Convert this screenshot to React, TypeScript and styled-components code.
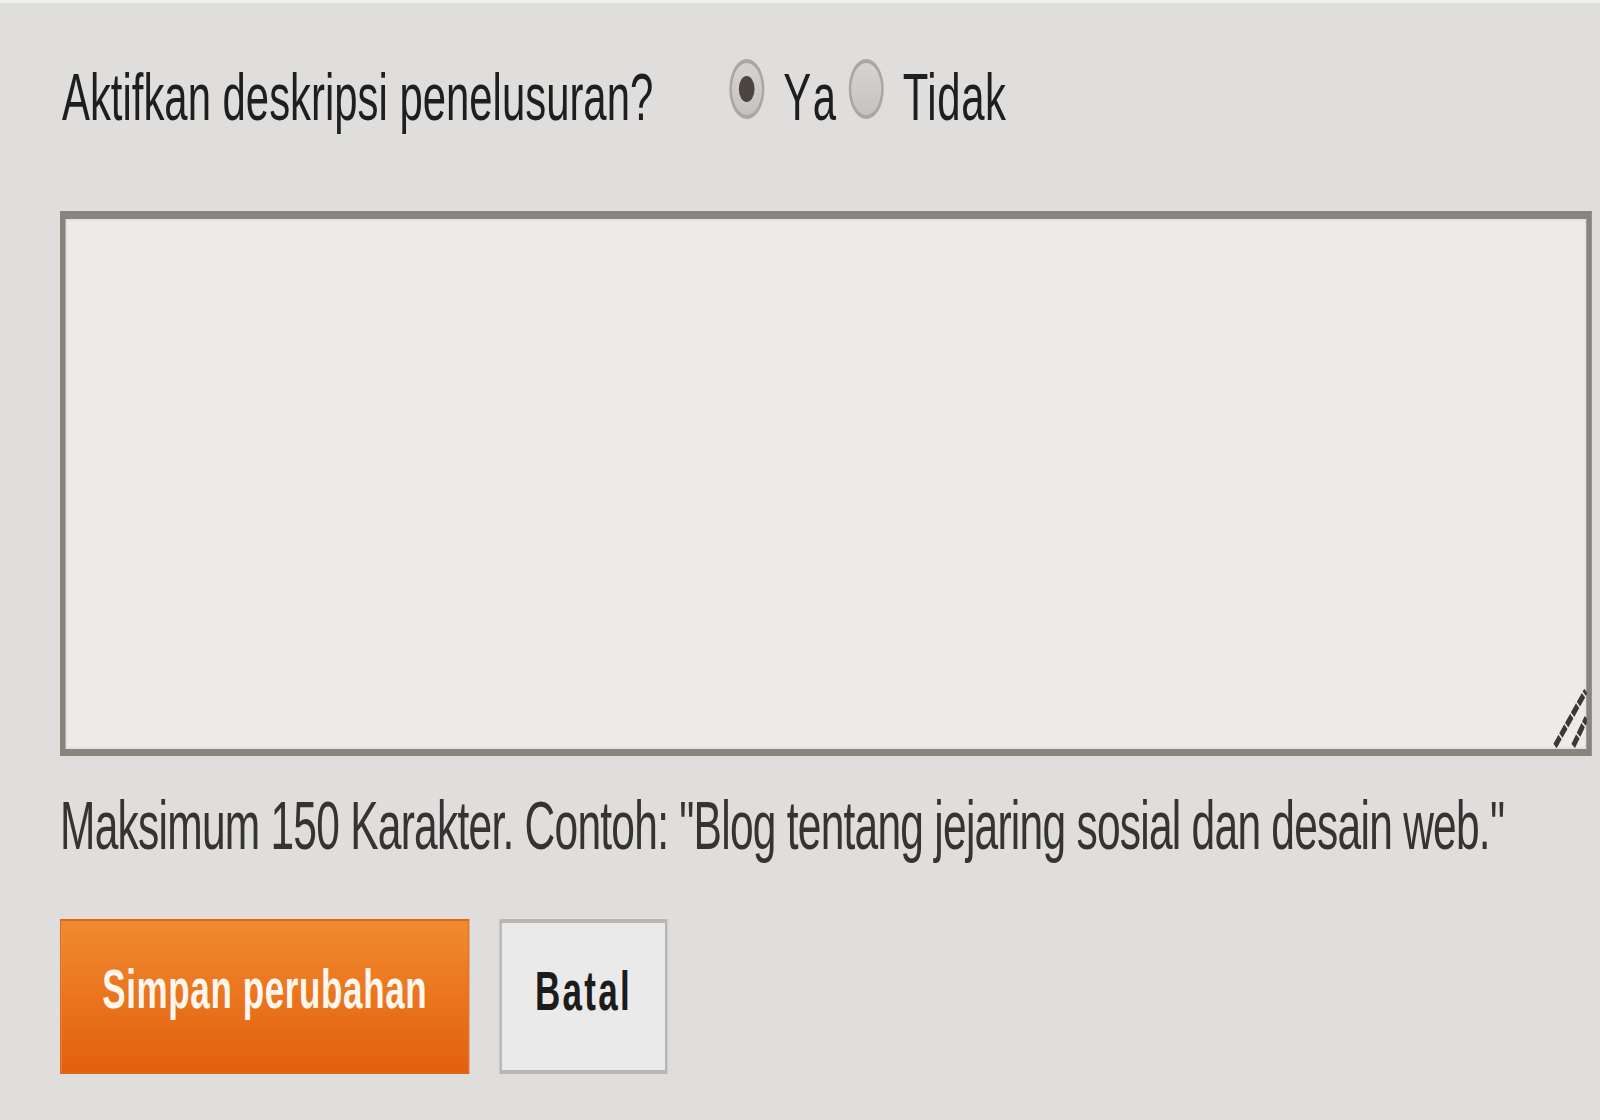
import styled, { createGlobalStyle } from 'styled-components';

// the screenshot is squeezed sideways, so the page is laid out wide and scaled back
const S = 0.625;
const ux = (n: number) => `${(n / S).toFixed(1)}px`;

const GlobalStyle = createGlobalStyle`
  html, body {
    margin: 0;
    padding: 0;
    overflow: hidden;
    background: #dfdedd;
  }
`;

const Stage = styled.div`
  width: ${ ux(1600) };
  height: 1120px;
  box-sizing: border-box;
  transform: scaleX(${ S });
  transform-origin: 0 0;
  border-top: 3px solid #efefee;
  padding: 54px 0 0 ${ ux(60) };
  font-family: "Liberation Sans", Arial, sans-serif;
  color: #1e1e1e;
`;

const Row = styled.div`
  display: flex;
  align-items: flex-end;
  height: 80px;
`;

const Question = styled.span`
  font-size: 67px;
  line-height: 80px;
  padding-left: ${ ux(2) };
  margin-right: ${ ux(76) };
  white-space: nowrap;
`;

const Radio = styled.span<{ $checked?: boolean }>`
  position: relative;
  width: ${ ux(35) };
  height: 60px;
  margin-bottom: 18px;
  box-sizing: border-box;
  border-radius: 50%;
  border: 4px solid #aaa6a3;
  background: linear-gradient(#d6d3d1, #c6c2bf);
  flex: none;

  &::after {
    content: '';
    display: ${ ({ $checked }) => ($checked ? 'block' : 'none') };
    position: absolute;
    left: 50%;
    top: 50%;
    width: ${ ux(16) };
    height: 26px;
    border-radius: 50%;
    background: #4b4441;
    transform: translate(-50%, -50%);
  }
`;

const Choice = styled.span<{ $gap: number; $spacing: number }>`
  font-size: 67px;
  line-height: 80px;
  margin-left: ${ ux(19) };
  margin-right: ${ ({ $gap }) => ux($gap) };
  letter-spacing: ${ ({ $spacing }) => $spacing }px;
`;

const AreaWrap = styled.div`
  position: relative;
  margin-top: 74px;
  width: ${ ux(1532) };
  height: 545px;
`;

const Area = styled.textarea`
  display: block;
  width: 100%;
  height: 100%;
  box-sizing: border-box;
  margin: 0;
  resize: none;
  outline: none;
  border-style: solid;
  border-color: #8a847f;
  border-width: 8px ${ ux(6) } 7px ${ ux(6) };
  background: #ecebe9;
  box-shadow: inset 0 0 0 2px #e4e2e0;
  font: 30px "Liberation Sans", Arial, sans-serif;
`;

const Grip = styled.svg`
  position: absolute;
  right: ${ ux(5) };
  bottom: 6px;
  width: ${ ux(34) };
  height: 62px;
  pointer-events: none;
`;

const Hint = styled.p`
  margin: 29px 0 0;
  font-size: 68px;
  line-height: 80px;
  color: #353433;
  letter-spacing: -1.2px;
  white-space: nowrap;
`;

const Buttons = styled.div`
  display: flex;
  gap: ${ ux(30) };
  margin-top: 54px;
`;

const Button = styled.button<{ $primary?: boolean }>`
  height: 155px;
  box-sizing: border-box;
  margin: 0;
  padding: 0 ${ ({ $primary }) => ux($primary ? 41 : 33) } 16px;
  font-family: "Liberation Sans", Arial, sans-serif;
  font-weight: bold;
  font-size: 56px;
  line-height: 135px;
  cursor: pointer;
  border-style: solid;
  border-width: ${ ({ $primary }) => ($primary ? '2px' : '4px') };
  border-color: ${ ({ $primary }) => ($primary ? '#e2661a' : '#b9b6b4') };
  background: ${ ({ $primary }) =>
    $primary ? 'linear-gradient(#f18a2e, #e3600f)' : '#ebeaea' };
  color: ${ ({ $primary }) => ($primary ? '#fff6ee' : '#1c1c1c') };
  letter-spacing: ${ ({ $primary }) => ($primary ? '1px' : '3.6px') };
`;

const App = () => {
  return (
    <>
      <GlobalStyle />
      <Stage>
        <Row>
          <Question>Aktifkan deskripsi penelusuran?</Question>
          <Radio $checked />
          <Choice $gap={8} $spacing={7.5}>Ya</Choice>
          <Radio />
          <Choice $gap={0} $spacing={1}>Tidak</Choice>
        </Row>

        <AreaWrap>
          <Area />
          <Grip viewBox="0 0 54 62" preserveAspectRatio="none">
            <path d="M3 58 L52 3" stroke="#3d3835" strokeWidth="7" strokeDasharray="12 2" />
            <path d="M32 58 L53 30" stroke="#3d3835" strokeWidth="7" strokeDasharray="12 2" />
          </Grip>
        </AreaWrap>

        <Hint>Maksimum 150 Karakter. Contoh: "Blog tentang jejaring sosial dan desain web."</Hint>

        <Buttons>
          <Button $primary>Simpan perubahan</Button>
          <Button>Batal</Button>
        </Buttons>
      </Stage>
    </>
  );
};

export default App;
